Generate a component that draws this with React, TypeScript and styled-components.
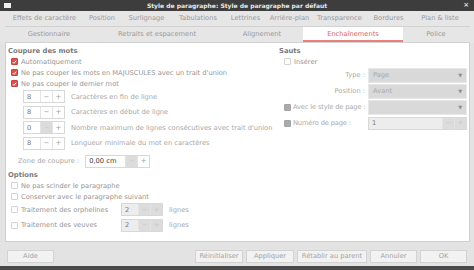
import styled, { createGlobalStyle } from "styled-components";

const Global = createGlobalStyle`
  html, body {
    margin: 0;
    padding: 0;
    background: #3a3a3a;
  }
  * {
    box-sizing: border-box;
  }
`;

const Window = styled.div`
  width: 474px;
  height: 270px;
  display: flex;
  flex-direction: column;
  font-family: "DejaVu Sans", sans-serif;
  font-size: 6.7px;
  color: #959595;
  background: #e3e3e3;
  border-bottom: 4px solid #4a4a4a;
  overflow: hidden;
`;

const TitleBar = styled.div`
  height: 11px;
  flex: none;
  background: #3d3d3d;
  display: flex;
  align-items: center;
  justify-content: center;
  position: relative;
  color: #e8e8e8;
  font-weight: bold;
  font-size: 6px;
`;

const WinIcon = styled.div`
  position: absolute;
  left: 4px;
  top: 3px;
  width: 7px;
  height: 5px;
  background: #eee;
`;

const CloseX = styled.div`
  position: absolute;
  right: 5px;
  top: 1px;
  font-size: 7px;
  color: #ddd;
`;

const TabBar = styled.div`
  flex: none;
  padding: 0 4px 0 5px;
  background: #e6e6e6;
`;

const TabRow = styled.div<{ $first?: boolean }>`
  height: 16px;
  display: flex;
  align-items: stretch;
  border-bottom: 1px solid #d2d2d2;
  ${(p) => (p.$first ? "padding-left: 1px;" : "")}
`;

const Tab = styled.div<{ $active?: boolean; $w: number }>`
  width: ${(p) => p.$w}px;
  display: flex;
  align-items: center;
  justify-content: center;
  white-space: nowrap;
  color: ${(p) => (p.$active ? "#e0605c" : "#999999")};
  background: ${(p) => (p.$active ? "#ffffff" : "transparent")};
  border-bottom: 2px solid ${(p) => (p.$active ? "#e8807c" : "transparent")};
`;

const Panel = styled.div`
  flex: 1;
  margin: 0 4px 0 5px;
  background: #ffffff;
  border-left: 1px solid #cfcfcf;
  border-right: 1px solid #cfcfcf;
  border-bottom: 1px solid #cfcfcf;
  display: grid;
  grid-template-columns: 271px 1fr;
  padding: 3px 0 0 2px;
`;

const Column = styled.div`
  display: flex;
  flex-direction: column;
`;

const Heading = styled.div`
  font-weight: bold;
  color: #7a7a7a;
  font-size: 6.8px;
  height: 10px;
  line-height: 10px;
`;

const CheckRow = styled.label<{ $indent?: number }>`
  display: flex;
  align-items: center;
  gap: 3px;
  height: 11px;
  padding-left: ${(p) => p.$indent ?? 3}px;
  white-space: nowrap;
`;

const Box = styled.span<{ $state: "on" | "off" | "mixed" }>`
  width: 7px;
  height: 7px;
  flex: none;
  border-radius: 1px;
  display: inline-flex;
  align-items: center;
  justify-content: center;
  background: ${(p) =>
    p.$state === "on" ? "#d9534f" : p.$state === "mixed" ? "#ababab" : "#fff"};
  border: 1px solid
    ${(p) =>
      p.$state === "on" ? "#c9433f" : p.$state === "mixed" ? "#a3a3a3" : "#d3d3d3"};
`;

const SpinRow = styled.div<{ $indent?: number }>`
  display: flex;
  align-items: center;
  height: 15.5px;
  padding-left: ${(p) => p.$indent ?? 15}px;
  gap: 6px;
  white-space: nowrap;
`;

const Spin = styled.div<{ $w: number; $disabled?: boolean }>`
  width: ${(p) => p.$w}px;
  height: 13px;
  flex: none;
  display: flex;
  border: 1px solid #d8d8d8;
  background: ${(p) => (p.$disabled ? "#ededed" : "#fff")};
`;

const SpinValue = styled.div<{ $dark?: boolean }>`
  flex: 1;
  padding-left: 3px;
  display: flex;
  align-items: center;
  color: ${(p) => (p.$dark ? "#333" : "#7a7a7a")};
`;

const SpinBtn = styled.div<{ $off?: boolean }>`
  width: 12px;
  flex: none;
  display: flex;
  align-items: center;
  justify-content: center;
  border-left: 1px solid #e3e3e3;
  color: ${(p) => (p.$off ? "#c9c9c9" : "#a0a0a0")};
  background: ${(p) => (p.$off ? "#dcdcdc" : "transparent")};
  font-size: 7px;
`;

const FieldLabel = styled.span`
  color: #a8a8a8;
`;

const RightGrid = styled.div`
  display: grid;
  grid-template-columns: 84px 99px;
  grid-auto-rows: 16px;
  align-items: center;
  padding-left: 5px;
`;

const RightLabel = styled.div`
  display: flex;
  justify-content: flex-end;
  align-items: center;
  gap: 3px;
  padding-right: 3px;
  color: #ababab;
  white-space: nowrap;
`;

const RightLeft = styled(RightLabel)`
  justify-content: flex-start;
  padding-right: 0;
  gap: 2px;
  letter-spacing: -0.15px;
`;

const Select = styled.div`
  height: 15px;
  background: #d9d9d9;
  border: 1px solid #e8e8e8;
  display: flex;
  align-items: center;
  justify-content: space-between;
  padding: 0 4px;
  color: #a8a8a8;
`;

const Caret = styled.span`
  font-size: 5px;
  color: #8a8a8a;
`;

const Footer = styled.div`
  height: 24px;
  flex: none;
  display: flex;
  align-items: center;
  padding: 4px 7px 0 7px;
  gap: 3px;
`;

const Button = styled.div<{ $w: number }>`
  width: ${(p) => p.$w}px;
  height: 13px;
  display: flex;
  align-items: center;
  justify-content: center;
  background: #f2f2f2;
  border: 1px solid #d3d3d3;
  color: #a3a3a3;
  white-space: nowrap;
`;

const Spacer = styled.div`
  flex: 1;
`;

function Check({ state }: { state: "on" | "off" | "mixed" }) {
  return (
    <Box $state={state}>
      {state === "on" && (
        <svg width="6" height="6" viewBox="0 0 6 6">
          <path d="M1 3.2 L2.4 4.6 L5 1.4" stroke="#fff" strokeWidth="1.2" fill="none" />
        </svg>
      )}
    </Box>
  );
}

function Spinner({
  value,
  w,
  minusOff,
  disabled,
  dark,
}: {
  value: string;
  w: number;
  minusOff?: boolean;
  disabled?: boolean;
  dark?: boolean;
}) {
  return (
    <Spin $w={w} $disabled={disabled}>
      <SpinValue $dark={dark}>{value}</SpinValue>
      <SpinBtn $off={minusOff || disabled}>−</SpinBtn>
      <SpinBtn $off={disabled}>+</SpinBtn>
    </Spin>
  );
}

const tabs1: [string, number][] = [
  ["Effets de caractère", 77],
  ["Position", 38],
  ["Surlignage", 51],
  ["Tabulations", 52],
  ["Lettrines", 43],
  ["Arrière-plan", 45],
  ["Transparence", 55],
  ["Bordures", 43],
  ["Plan & liste", 60],
];

const tabs2: [string, number][] = [
  ["Gestionnaire", 88],
  ["Retraits et espacement", 128],
  ["Alignement", 82],
  ["Enchaînements", 100],
  ["Police", 66],
];

export default function App() {
  return (
    <>
      <Global />
      <Window>
        <TitleBar>
          <WinIcon />
          Style de paragraphe: Style de paragraphe par défaut
          <CloseX>×</CloseX>
        </TitleBar>
        <TabBar>
          <TabRow $first>
            {tabs1.map(([t, w]) => (
              <Tab key={t} $w={w}>
                {t}
              </Tab>
            ))}
          </TabRow>
          <TabRow>
            {tabs2.map(([t, w]) => (
              <Tab key={t} $w={w} $active={t === "Enchaînements"}>
                {t}
              </Tab>
            ))}
          </TabRow>
        </TabBar>
        <Panel>
          <Column>
            <Heading>Coupure des mots</Heading>
            <CheckRow>
              <Check state="on" />
              Automatiquement
            </CheckRow>
            <CheckRow>
              <Check state="on" />
              Ne pas couper les mots en MAJUSCULES avec un trait d'union
            </CheckRow>
            <CheckRow>
              <Check state="on" />
              Ne pas couper le dernier mot
            </CheckRow>
            <SpinRow>
              <Spinner w={42} value="8" />
              <FieldLabel>Caractères en fin de ligne</FieldLabel>
            </SpinRow>
            <SpinRow>
              <Spinner w={42} value="8" />
              <FieldLabel>Caractères en début de ligne</FieldLabel>
            </SpinRow>
            <SpinRow>
              <Spinner w={42} value="0" minusOff />
              <FieldLabel>Nombre maximum de lignes consécutives avec trait d'union</FieldLabel>
            </SpinRow>
            <SpinRow>
              <Spinner w={42} value="8" />
              <FieldLabel>Longueur minimale du mot en caractères</FieldLabel>
            </SpinRow>
            <SpinRow $indent={10} style={{ height: 18, marginTop: 1 }}>
              <FieldLabel>Zone de coupure :</FieldLabel>
              <Spinner w={65} value="0,00 cm" minusOff dark />
            </SpinRow>
            <Heading>Options</Heading>
            <CheckRow>
              <Check state="off" />
              Ne pas scinder le paragraphe
            </CheckRow>
            <CheckRow>
              <Check state="off" />
              Conserver avec le paragraphe suivant
            </CheckRow>
            <SpinRow $indent={3} style={{ gap: 0 }}>
              <CheckRow $indent={0} style={{ width: 110 }}>
                <Check state="off" />
                Traitement des orphelines
              </CheckRow>
              <Spinner w={42} value="2" disabled />
              <FieldLabel style={{ marginLeft: 6 }}>lignes</FieldLabel>
            </SpinRow>
            <SpinRow $indent={3} style={{ gap: 0 }}>
              <CheckRow $indent={0} style={{ width: 110 }}>
                <Check state="off" />
                Traitement des veuves
              </CheckRow>
              <Spinner w={42} value="2" disabled />
              <FieldLabel style={{ marginLeft: 6 }}>lignes</FieldLabel>
            </SpinRow>
          </Column>
          <Column>
            <Heading>Sauts</Heading>
            <CheckRow $indent={5}>
              <Check state="off" />
              Insérer
            </CheckRow>
            <RightGrid>
              <RightLabel>Type :</RightLabel>
              <Select>
                Page
                <Caret>▼</Caret>
              </Select>
              <RightLabel>Position :</RightLabel>
              <Select>
                Avant
                <Caret>▼</Caret>
              </Select>
              <RightLeft>
                <Check state="mixed" />
                Avec le style de page :
              </RightLeft>
              <Select>
                <span />
                <Caret>▼</Caret>
              </Select>
              <RightLeft>
                <Check state="mixed" />
                Numéro de page :
              </RightLeft>
              <Spinner w={99} value="1" disabled />
            </RightGrid>
          </Column>
        </Panel>
        <Footer>
          <Button $w={47}>Aide</Button>
          <Spacer />
          <Button $w={48}>Réinitialiser</Button>
          <Button $w={48}>Appliquer</Button>
          <Button $w={70}>Rétablir au parent</Button>
          <Button $w={47}>Annuler</Button>
          <Button $w={47}>OK</Button>
        </Footer>
      </Window>
    </>
  );
}
